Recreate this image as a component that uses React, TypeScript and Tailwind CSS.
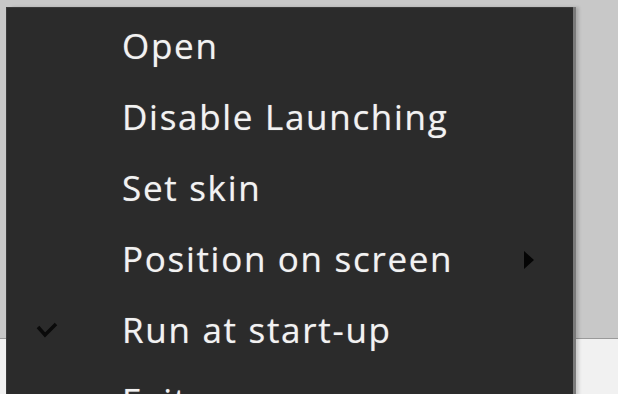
import React from "react";

const items = [
  { label: "Open" },
  { label: "Disable Launching" },
  { label: "Set skin" },
  { label: "Position on screen", submenu: true },
  { label: "Run at start-up", checked: true },
  { label: "Exit" },
];

export default function App() {
  return (
    <div className="relative w-[618px] h-[394px] overflow-hidden bg-[#c9c9c9]">
      <div className="flex flex-col h-full">
        <div className="h-[338px] bg-[#c8c8c8]" />
        <div className="h-px bg-[#9a9a9a]" />
        <div className="flex-1 bg-[#f1f1f1]" />
      </div>
      <div className="absolute left-[6px] top-[7px] w-[567px] h-[420px] bg-[#2b2b2b] border-l border-t border-[#3a3a3a] shadow-[3px_0_0_#7a7a7a,6px_0_3px_rgba(0,0,0,0.15)] pt-[2px]">
        {items.map((it) => (
          <div key={it.label} className="relative flex items-center h-[71px]">
            <div className="w-[115px] flex justify-center shrink-0">
              {it.checked && (
                <svg width="22" height="18" viewBox="0 0 22 18" className="ml-[-36px]">
                  <path d="M2 6 L9 14 L20 3" stroke="#0a0a0a" strokeWidth="3.5" fill="none" />
                </svg>
              )}
            </div>
            <span
              className="text-[#f2f2f2] text-[35px] font-medium leading-[71px] tracking-[1.7px] whitespace-nowrap [text-shadow:0_0_1px_rgba(255,255,255,0.5)]"
              style={{ fontFamily: '"Open Sans", "Noto Sans", sans-serif' }}
            >
              {it.label}
            </span>
            {it.submenu && (
              <svg width="10" height="18" viewBox="0 0 10 18" className="absolute left-[517px] top-[28px]">
                <path d="M0 0 L10 9 L0 18 Z" fill="#050505" />
              </svg>
            )}
          </div>
        ))}
      </div>
    </div>
  );
}
